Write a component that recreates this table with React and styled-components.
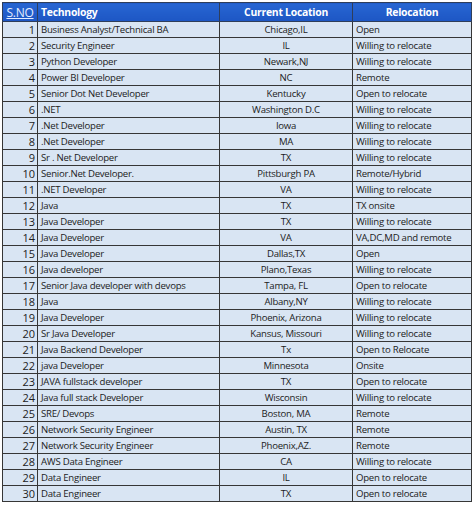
import styled, { createGlobalStyle } from "styled-components";

const rows = [
  ["Business Analyst/Technical BA", "Chicago,IL", "Open"],
  ["Security Engineer", "IL", "Willing to relocate"],
  ["Python Developer", "Newark,NJ", "Willing to relocate"],
  ["Power BI Developer", "NC", "Remote"],
  ["Senior Dot Net Developer", "Kentucky", "Open to relocate"],
  [".NET", "Washington D.C", "Willing to relocate"],
  [".Net Developer", "Iowa", "Willing to relocate"],
  [".Net Developer", "MA", "Willing to relocate"],
  ["Sr . Net Developer", "TX", "Willing to relocate"],
  ["Senior.Net Developer.", "Pittsburgh PA", "Remote/Hybrid"],
  [".NET Developer", "VA", "Willing to relocate"],
  ["Java", "TX", "TX onsite"],
  ["Java Developer", "TX", "Willing to relocate"],
  ["Java Developer", "VA", "VA,DC,MD and remote"],
  ["Java Developer", "Dallas,TX", "Open"],
  ["Java developer", "Plano,Texas", "Willing to relocate"],
  ["Senior Java developer with devops", "Tampa, FL", "Open to relocate"],
  ["Java", "Albany,NY", "Willing to relocate"],
  ["Java Developer", "Phoenix, Arizona", "Willing to relocate"],
  ["Sr Java Developer", "Kansus, Missouri", "Willing to relocate"],
  ["Java Backend Developer", "Tx", "Open to Relocate"],
  ["java Developer", "Minnesota", "Onsite"],
  ["JAVA fullstack developer", "TX", "Open to relocate"],
  ["Java full stack Developer", "Wisconsin", "Willing to relocate"],
  ["SRE/ Devops", "Boston, MA", "Remote"],
  ["Network Security Engineer", "Austin, TX", "Remote"],
  ["Network Security Engineer", "Phoenix,AZ.", "Remote"],
  ["AWS Data Engineer", "CA", "Willing to relocate"],
  ["Data Engineer", "IL", "Open to relocate"],
  ["Data Engineer", "TX", "Open to relocate"],
];

const GlobalStyle = createGlobalStyle`
  body {
    margin: 0;
    background: #ffffff;
    font-family: "Open Sans", "Liberation Sans", sans-serif;
  }
`;

const Page = styled.div`
  padding: 2px 3px 0 2px;
`;

const Table = styled.table`
  width: 469px;
  border-collapse: collapse;
  table-layout: fixed;
  font-size: 9.6px;
  letter-spacing: -0.25px;
  color: #1c1c1c;
`;

const HeadCell = styled.th`
  height: 18px;
  padding: 0 3px;
  background: linear-gradient(#2866d2, #1d56c4);
  color: #ffffff;
  font-weight: 700;
  font-size: 10.4px;
  text-align: ${(p) => p.$align || "center"};
  border: 1px solid #2f3e5a;
  white-space: nowrap;
`;

const SnoHead = styled(HeadCell)`
  font-weight: 400;
  font-size: 12px;
  color: #e4ecff;
  text-decoration: underline;
  text-align: center;
  padding: 0 1px;
`;

const Cell = styled.td`
  height: 15px;
  padding: 0 3px;
  background: #d9e5f3;
  border: 1.4px solid #363636;
  text-align: ${(p) => p.$align || "left"};
  white-space: nowrap;
  overflow: hidden;
  line-height: 14px;
`;

const NumCell = styled(Cell)`
  font-size: 11px;
  letter-spacing: 0;
  padding: 0 2px 0 0;
`;

export default function App() {
  return (
    <>
      <GlobalStyle />
      <Page>
        <Table>
          <colgroup>
            <col style={{ width: 35 }} />
            <col style={{ width: 182 }} />
            <col style={{ width: 133 }} />
            <col style={{ width: 119 }} />
          </colgroup>
          <thead>
            <tr>
              <SnoHead>S.NO</SnoHead>
              <HeadCell $align="left">Technology</HeadCell>
              <HeadCell>Current Location</HeadCell>
              <HeadCell>Relocation</HeadCell>
            </tr>
          </thead>
          <tbody>
            {rows.map((r, i) => (
              <tr key={i}>
                <NumCell $align="right">{i + 1}</NumCell>
                <Cell>{r[0]}</Cell>
                <Cell $align="center">{r[1]}</Cell>
                <Cell>{r[2]}</Cell>
              </tr>
            ))}
          </tbody>
        </Table>
      </Page>
    </>
  );
}
